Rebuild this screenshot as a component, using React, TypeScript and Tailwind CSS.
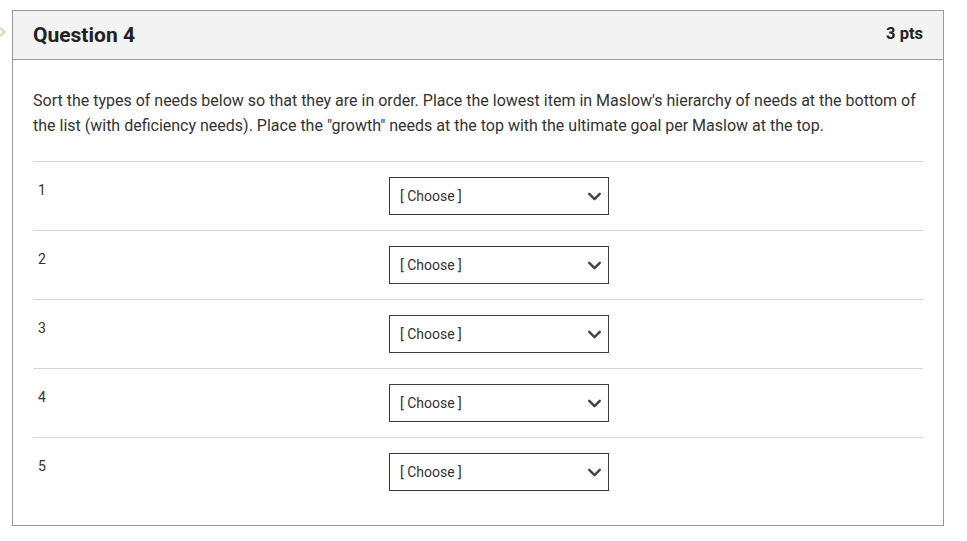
import { ChevronDown } from 'lucide-react';

const rows = [1, 2, 3, 4, 5];

export default function App() {
  return (
    <div className="relative min-h-[541px] w-[967px] bg-white pt-[10px] pl-[12px] font-['Roboto',_'Liberation_Sans',_sans-serif] text-[#2d2d2d]">
      {/* left nav marker */}
      <svg className="absolute left-0 top-[27px]" width="6" height="10" viewBox="0 0 6 10">
        <path d="M0.5 1 L4.5 5 L0.5 9" fill="none" stroke="#c9c58f" strokeWidth="1.3" />
      </svg>

      <div className="w-[932px] border border-[#9a9a9a] bg-white">
        {/* Header */}
        <div className="flex h-[49px] items-center justify-between border-b border-[#9a9a9a] bg-[#f3f3f3] px-[20px]">
          <h2 className="text-[21px] font-bold leading-none text-[#222]">Question 4</h2>
          <span className="-mt-[1px] text-[16.5px] font-bold leading-none text-[#222]">3 pts</span>
        </div>

        {/* Body */}
        <div className="px-[20px] pt-[28px] pb-[19px]">
          <p className="text-[16px] leading-[25px] text-[#333]">
            Sort the types of needs below so that they are in order. Place the lowest item in Maslow's hierarchy of needs at the bottom of the list (with deficiency needs). Place the "growth" needs at the top with the ultimate goal per Maslow at the top.
          </p>

          <div className="mt-[23px]">
            {rows.map((n) => (
              <div key={n} className="flex border-t border-[#d6d6d6] py-[15px]">
                <div className="w-[356px] pl-[5px] pt-[5px] text-[14px] leading-[16px] text-[#333]">{n}</div>
                <div className="flex h-[38px] w-[220px] items-center justify-between border border-[#3c3c3c] pl-[10px] pr-[3px]">
                  <span className="text-[14px] text-[#333]">[ Choose ]</span>
                  <ChevronDown size={21} strokeWidth={2.8} className="text-[#444]" />
                </div>
              </div>
            ))}
          </div>
        </div>
      </div>
    </div>
  );
}
